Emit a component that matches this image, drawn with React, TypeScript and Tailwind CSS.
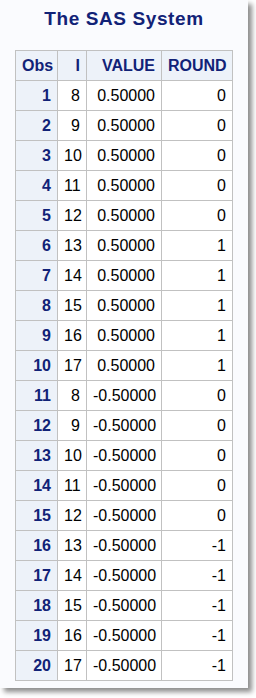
const rows: [number, number, string, string][] = [
  [1, 8, '0.50000', '0'],
  [2, 9, '0.50000', '0'],
  [3, 10, '0.50000', '0'],
  [4, 11, '0.50000', '0'],
  [5, 12, '0.50000', '0'],
  [6, 13, '0.50000', '1'],
  [7, 14, '0.50000', '1'],
  [8, 15, '0.50000', '1'],
  [9, 16, '0.50000', '1'],
  [10, 17, '0.50000', '1'],
  [11, 8, '-0.50000', '0'],
  [12, 9, '-0.50000', '0'],
  [13, 10, '-0.50000', '0'],
  [14, 11, '-0.50000', '0'],
  [15, 12, '-0.50000', '0'],
  [16, 13, '-0.50000', '-1'],
  [17, 14, '-0.50000', '-1'],
  [18, 15, '-0.50000', '-1'],
  [19, 16, '-0.50000', '-1'],
  [20, 17, '-0.50000', '-1'],
];

const head = 'border border-[#c1c1c1] bg-[#edf2f9] px-[6px] text-right font-bold text-[#112277]';
const cell = 'border border-[#c1c1c1] bg-white px-[6px] text-right text-black';

export default function App() {
  return (
    <div className="h-[698px] w-[256px] bg-white [font-family:'Liberation_Sans',Arial,sans-serif]">
      <div className="flex h-[688px] w-[248px] flex-col items-center bg-[#fafbfe] shadow-[4px_4px_5px_rgba(0,0,0,0.45)]">
        <h1 className="mt-[6px] h-[44px] text-[19px] font-bold leading-[26px] tracking-[0.6px] text-[#112277]">
          The SAS System
        </h1>
        <table className="w-[217px] table-fixed border-collapse text-[16px] leading-[18px]">
          <thead>
            <tr className="h-[30px]">
              <th className={`${head} w-[42px]`}>Obs</th>
              <th className={`${head} w-[29px]`}>I</th>
              <th className={`${head} w-[75px]`}>VALUE</th>
              <th className={`${head} w-[71px]`}>ROUND</th>
            </tr>
          </thead>
          <tbody>
            {rows.map(([obs, i, value, round]) => (
              <tr key={obs} className="h-[30px]">
                <th className={head}>{obs}</th>
                <td className={cell}>{i}</td>
                <td className={cell}>{value}</td>
                <td className={cell}>{round}</td>
              </tr>
            ))}
          </tbody>
        </table>
      </div>
    </div>
  );
}
